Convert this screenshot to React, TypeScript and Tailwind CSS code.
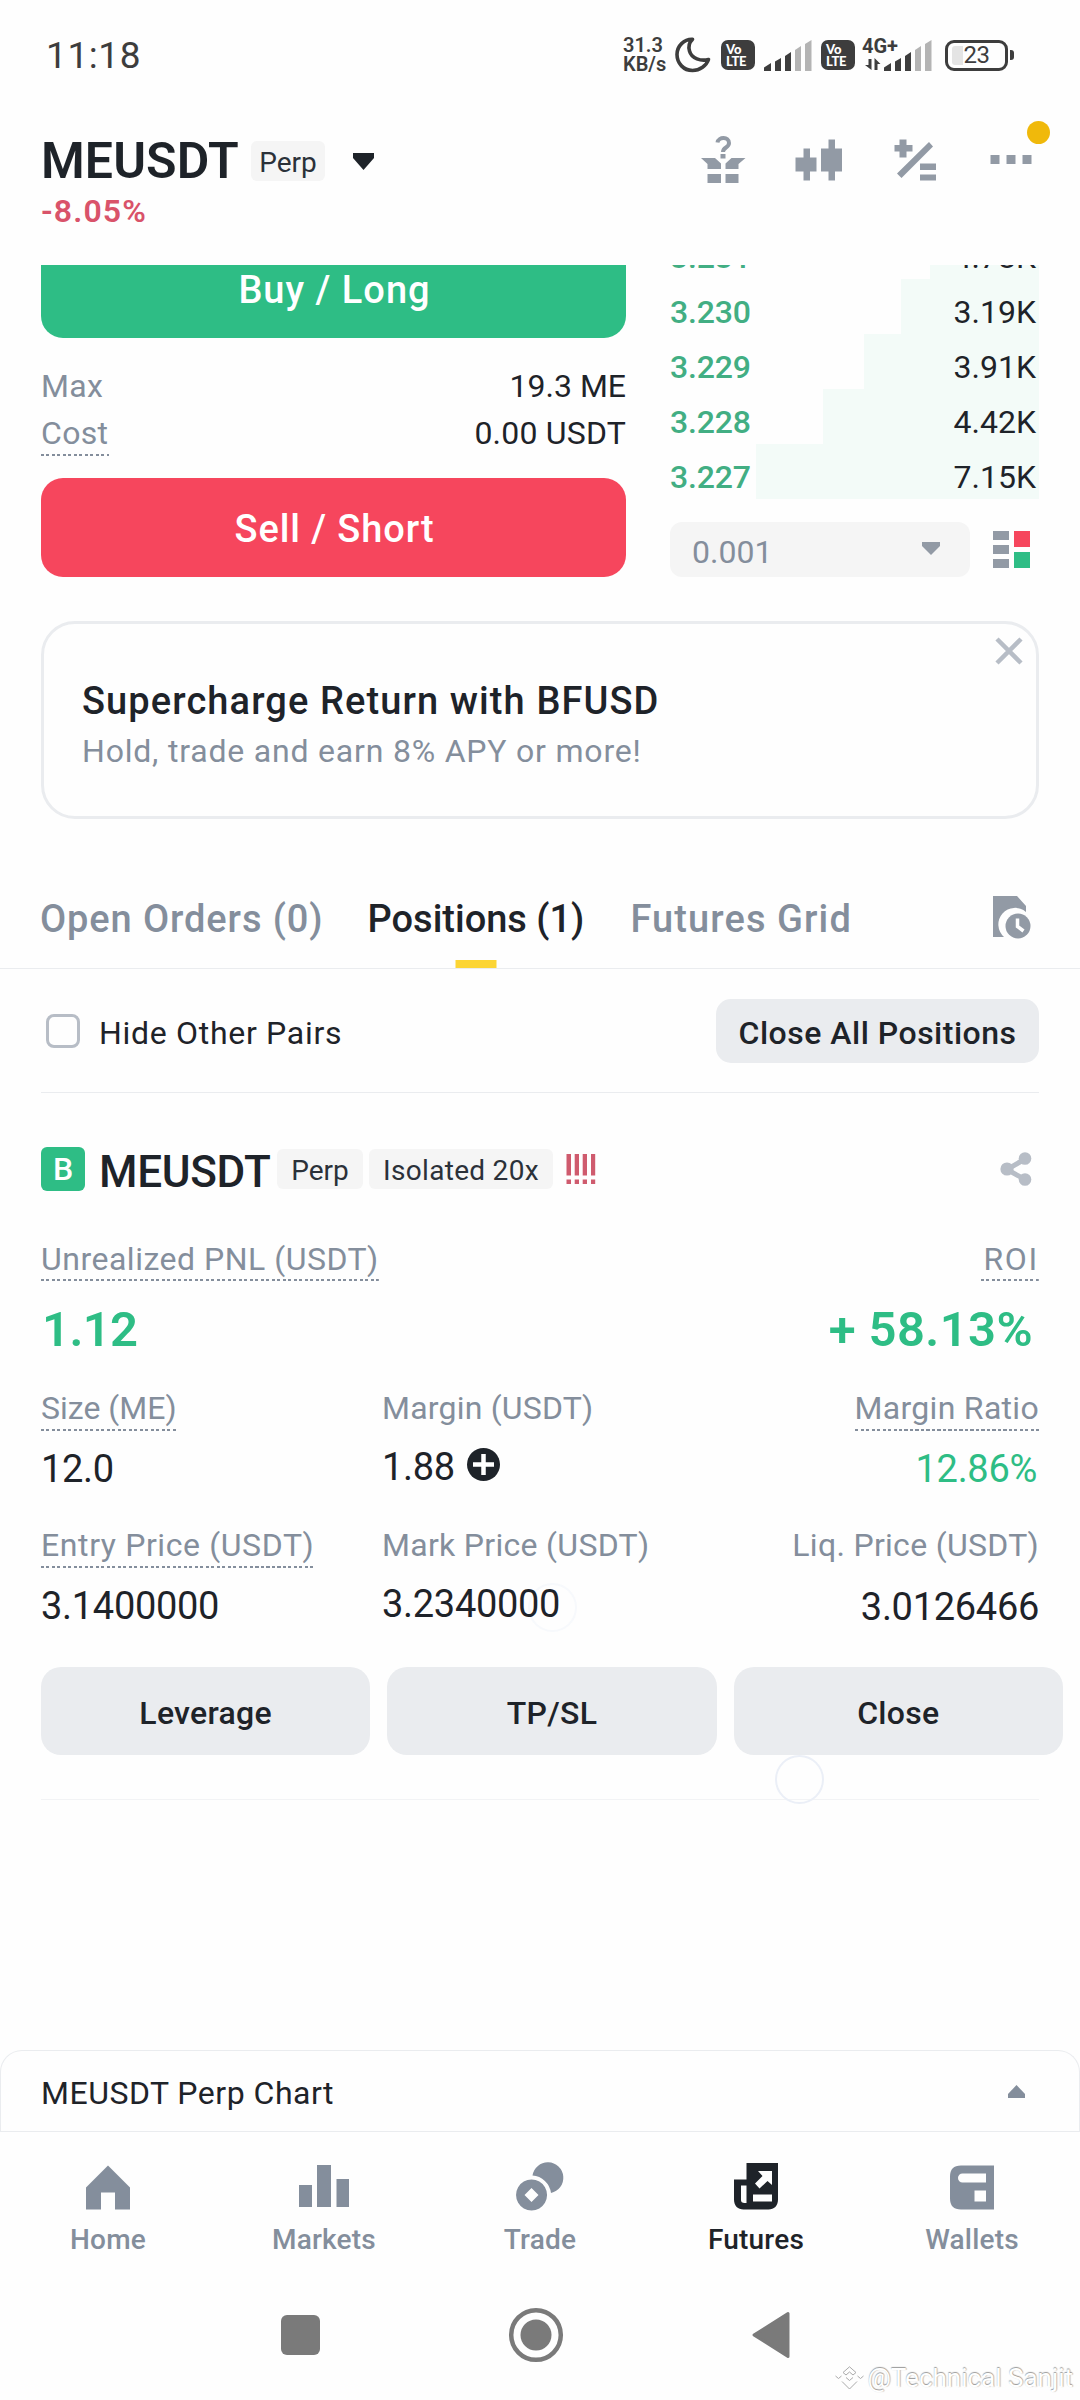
import clsx from "clsx";

const dashed =
  "bg-[repeating-linear-gradient(to_right,#848e9c_0_3px,transparent_3px_5.5px)] bg-[length:100%_2px] bg-bottom bg-no-repeat";

function Signal() {
  return (
    <svg className="h-[31px] w-[48px]" viewBox="0 0 48 31">
      <path d="M0 31V27.5L7 23V31ZM11 31V21.5L17 18V31ZM21 31V16L27 12V31Z" fill="#3d3d3d" />
      <path d="M31 31V10L37 6V31ZM41 31V4L47.500 0V31Z" fill="#b4b4b4" />
    </svg>
  );
}

function VoLte() {
  return (
    <div className="flex h-[30px] w-[34px] flex-col items-start justify-center rounded-[7px] bg-[#3d3d3d] pl-[5px] font-[Lato] text-[13px] leading-[12px] font-black text-white">
      <span>Vo</span>
      <span className="tracking-[-0.2px]">LTE</span>
    </div>
  );
}

function StatusBar() {
  return (
    <div className="flex h-[110px] shrink-0 items-center pr-[72px] pl-[46px] text-[#3d3d3d]">
      <span className="text-[37px] tracking-[0.6px]">11:18</span>
      <div className="ml-auto flex items-center">
        <div className="w-[52px] text-[20px] leading-[19px] font-semibold">
          <p>31.3</p>
          <p>KB/s</p>
        </div>
        <svg className="h-[36px] w-[36px]" viewBox="0 0 36 36" fill="none">
          <path
            d="M17.500 2.300C9 2 2 9 2 17.500C2 26.500 8.800 33.500 17.500 33.500C25 33.500 31.500 28.500 33.500 22.500C26 24.500 16.500 21.500 14.500 14C13.300 9.500 14.500 5 17.500 2.300Z"
            stroke="#3d3d3d"
            strokeWidth="3.600"
            strokeLinejoin="round"
          />
        </svg>
        <div className="ml-[10px]">
          <VoLte />
        </div>
        <div className="ml-[9px]">
          <Signal />
        </div>
        <div className="ml-[9px]">
          <VoLte />
        </div>
        <div className="relative ml-[29px]">
          <Signal />
          <span className="absolute -top-[4px] -left-[22px] text-[20px] leading-[20px] font-bold">
            4G+
          </span>
          <svg className="absolute top-[18px] -left-[19px] h-[13px] w-[16px]" viewBox="0 0 16 13">
            <path d="M3.500 1H6.500V12L0 7H3.500ZM9.500 12V0L15.500 6H12.500V12Z" fill="#3d3d3d" />
          </svg>
        </div>
        <div className="relative ml-[13px] flex h-[31px] w-[63px] items-center justify-center rounded-[9px] border-[3px] border-[#3d3d3d]">
          <div className="absolute left-[4px] h-[19px] w-[11px] rounded-l-[3px] bg-[#e4e4e4]" />
          <span className="relative text-[24px] leading-none tracking-[-0.5px]">23</span>
          <div className="absolute -right-[9px] h-[10px] w-[4px] rounded-r-[3px] bg-[#3d3d3d]" />
        </div>
      </div>
    </div>
  );
}

function Tag({ children, className }: { children: string; className?: string }) {
  return (
    <span
      className={clsx(
        "flex h-[40px] items-center justify-center rounded-[6px] bg-[#f5f5f5] pt-[3px] text-[28px] text-[#2b3139]",
        className
      )}
    >
      {children}
    </span>
  );
}

function Header() {
  return (
    <header className="flex h-[155px] shrink-0 justify-between pt-[26px] pr-[45px] pl-[41px]">
      <div>
        <div className="flex h-[50px] items-center">
          <h1 className="w-[210px] text-[50px] leading-none font-semibold tracking-[0.1px]">MEUSDT</h1>
          <Tag className="w-[74px]">Perp</Tag>
          <svg className="ml-[28px] h-[17px] w-[21px]" viewBox="0 0 21 17">
            <path d="M0 0H21V5L10.500 17L0 5Z" fill="#1e2329" />
          </svg>
        </div>
        <p className="flex h-[49px] items-center text-[32px] font-semibold tracking-[1.100px] text-[#d9536a]">
          -8.05%
        </p>
      </div>
      <div className="flex gap-12">
        <svg className="h-12 w-12" viewBox="0 0 48 48" fill="#929aa5">
          <path
            d="M18.500 6.500C19.500 .500 30 .500 30 7C30 12 24 11 24 16"
            fill="none"
            stroke="#929aa5"
            strokeWidth="4"
          />
          <path d="M21.500 18H26.500V22.500H21.500ZM2 22H16L22 27.500V33H8.500V28ZM46.500 22H32.500L26.500 27.500V33H39.500V28ZM8.500 38H22V47H8.500ZM26.500 38H39.500V47H26.500Z" />
        </svg>
        <svg className="h-12 w-12" viewBox="0 0 48 48" fill="#929aa5">
          <path d="M0.500 21.500H8.500V12.500H15V21.500H21.500V35.500H15V44.500H8.500V35.500H.500ZM26 12.500H33.500V3.500H40V12.500H47V35.500H40V44.500H33.500V35.500H26Z" />
        </svg>
        <svg className="h-12 w-12" viewBox="0 0 48 48" fill="#929aa5">
          <path d="M8.500 3.500H15.500V9H21.500V15.500H15.500V21.500H8.500V15.500H3.500V9H8.500ZM38 6L42 10.500L10.500 42L6 37.500ZM29 27.500H45V34H29ZM29 38.500H45V44.500H29Z" />
        </svg>
        <div className="relative h-12 w-12">
          <svg className="h-12 w-12" viewBox="0 0 48 48" fill="#929aa5">
            <path d="M3.500 19H12.500V28H3.500ZM19.500 19H28.500V28H19.500ZM35.500 19H44.500V28H35.500Z" />
          </svg>
          <span className="absolute -top-[15px] left-[40px] size-[23px] rounded-full bg-[#f0b90b]" />
        </div>
      </div>
    </header>
  );
}

const bids = [
  { price: "3.231", amount: "4.78K", width: "w-[109px]" },
  { price: "3.230", amount: "3.19K", width: "w-[138px]" },
  { price: "3.229", amount: "3.91K", width: "w-[175px]" },
  { price: "3.228", amount: "4.42K", width: "w-[216px]" },
  { price: "3.227", amount: "7.15K", width: "w-[283px]" },
];

function OrderSection() {
  return (
    <section className="flex h-[312px] shrink-0 justify-between overflow-hidden px-[41px]">
      <div className="w-[585px]">
        <button className="-mt-[25px] flex h-[98px] w-full items-center justify-center rounded-[22px] bg-[#2ebd85] pt-[2px] pl-[2px] text-[38px] font-medium tracking-[1px] text-white">
          Buy / Long
        </button>
        <div className="mt-[24px] flex h-[47px] items-center justify-between">
          <span className="tracking-[0.3px] text-[#848e9c]">Max</span>
          <span>19.3 ME</span>
        </div>
        <div className="flex h-[47px] items-center justify-between">
          <span className={clsx("flex h-full items-center pr-px tracking-[0.3px] text-[#848e9c]", dashed)}>
            Cost
          </span>
          <span className="tracking-[0.2px]">0.00 USDT</span>
        </div>
        <button className="mt-[22px] flex h-[99px] w-full items-center justify-center rounded-[22px] bg-[#f6465d] pt-[2px] pl-[2px] text-[38px] font-medium tracking-[0.9px] text-white">
          Sell / Short
        </button>
      </div>
      <div className="w-[369px]">
        <div className="-mt-[41px]">
          {bids.map((b) => (
            <div key={b.price} className="relative flex h-[55px] items-center justify-between pt-[10px] pr-[3px]">
              <div className={clsx("absolute inset-y-0 right-0 bg-[#f3fbf8]", b.width)} />
              <span className="relative font-medium tracking-[-0.2px] text-[#42ae83]">{b.price}</span>
              <span className="relative">{b.amount}</span>
            </div>
          ))}
        </div>
        <div className="mt-[23px] flex items-center">
          <div className="flex h-[55px] w-[300px] items-center justify-between rounded-[12px] bg-[#f5f5f5] pt-[4px] pr-[30px] pl-[22px] text-[#848e9c]">
            0.001
            <svg className="-mt-[6px] h-[13px] w-[18px]" viewBox="0 0 18 13">
              <path d="M0 0H18V4L9 13L0 4Z" fill="#929aa5" />
            </svg>
          </div>
          <svg className="ml-[23px] h-[37px] w-[37px]" viewBox="0 0 37 37">
            <path d="M0 0H16V9H0ZM0 14H16V23H0ZM0 28H16V37H0Z" fill="#929aa5" />
            <path d="M21 0H37V16H21Z" fill="#f6465d" />
            <path d="M21 21H37V37H21Z" fill="#2ebd85" />
          </svg>
        </div>
      </div>
    </section>
  );
}

function Banner() {
  return (
    <section className="relative mx-[41px] mt-[44px] h-[198px] shrink-0 rounded-[34px] border-[3px] border-[#eaecef] pt-[51px] pl-[38px]">
      <p className="flex h-[52px] items-center text-[38px] font-medium tracking-[1.100px]">
        Supercharge Return with BFUSD
      </p>
      <p className="flex h-[47px] items-center tracking-[0.8px] text-[#848e9c]">
        Hold, trade and earn 8% APY or more!
      </p>
      <svg className="absolute top-[13px] right-[13px] h-[28px] w-[28px]" viewBox="0 0 28 28">
        <path d="M2 2L26 26M26 2L2 26" stroke="#b7bdc6" strokeWidth="4.500" />
      </svg>
    </section>
  );
}

function Tabs() {
  return (
    <nav className="mt-[50px] flex h-[100px] shrink-0 items-center border-b border-[#eaecef] pr-[48px] pl-[40px] text-[38px] font-medium text-[#848e9c]">
      <span className="tracking-[0.9px]">Open Orders (0)</span>
      <span className="relative ml-[44px] flex h-full items-center text-[#1e2329]">
        Positions (1)
        <span className="absolute bottom-0 left-1/2 h-[8px] w-[41px] -translate-x-1/2 bg-[#fcd535]" />
      </span>
      <span className="ml-[46px] tracking-[1.100px]">Futures Grid</span>
      <svg className="mr-px mb-[2px] ml-auto h-[43px] w-[39px]" viewBox="0 0 39 43">
        <path d="M1 0H25L34 10V16A14.500 14.500 0 0 0 12 41H1Z" fill="#929aa5" />
        <circle cx="26" cy="30" r="12.500" fill="#929aa5" />
        <path d="M25.500 22.500V30.500L31.500 35" fill="none" stroke="#fff" strokeWidth="3.500" />
      </svg>
    </nav>
  );
}

function Filters() {
  return (
    <div className="mx-[41px] flex h-[124px] shrink-0 items-center border-b border-[#eaecef]">
      <span className="ml-[5px] size-[34px] rounded-[8px] border-[3px] border-[#b7bdc6]" />
      <span className="ml-[19px] pt-[4px] tracking-[0.7px]">Hide Other Pairs</span>
      <button className="ml-auto flex h-[64px] w-[323px] items-center justify-center rounded-[15px] bg-[#eaecef] pt-[4px] font-medium tracking-[0.5px]">
        Close All Positions
      </button>
    </div>
  );
}

function Stat({
  label,
  children,
  underline,
  right,
  labelClass = "tracking-[0.3px]",
  className,
}: {
  label: string;
  children: React.ReactNode;
  underline?: boolean;
  right?: boolean;
  labelClass?: string;
  className?: string;
}) {
  return (
    <div className={clsx("flex flex-col", right ? "items-end" : "items-start")}>
      <span
        className={clsx("flex h-[45px] items-center pb-px text-[#848e9c]", labelClass, underline && dashed)}
      >
        {label}
      </span>
      <span
        className={clsx("mt-[13px] flex h-[50px] items-center text-[38px] tracking-[-0.3px]", className)}
      >
        {children}
      </span>
    </div>
  );
}

function Position() {
  return (
    <section className="relative isolate mx-[41px] flex h-[707px] shrink-0 flex-col border-b border-[#f2f3f5] pt-[54px]">
      <div className="flex h-[44px] items-center">
        <span className="flex size-[44px] items-center justify-center rounded-[6px] bg-[#2ebd85] text-[32px] font-medium text-white">
          B
        </span>
        <h2 className="ml-[14px] w-[177px] pt-[5px] text-[44px] leading-none font-medium tracking-[-0.3px]">
          MEUSDT
        </h2>
        <Tag className="ml-px w-[86px]">Perp</Tag>
        <Tag className="ml-[6px] w-[184px] tracking-[0.3px]">Isolated 20x</Tag>
        <svg className="ml-[13px] h-[30px] w-[30px]" viewBox="0 0 30 30" fill="#cf5b6e">
          <path d="M.500 0H5V21.500H.500ZM8.700 0H13V21.500H8.700ZM16.700 0H21V21.500H16.700ZM25 0H29.200V21.500H25ZM.500 25.500H5V30H.500ZM8.700 25.500H13V30H8.700ZM16.700 25.500H21V30H16.700ZM25 25.500H29.200V30H25Z" />
        </svg>
        <svg className="mr-[7px] ml-auto h-[34px] w-[32px]" viewBox="0 0 32 34">
          <path d="M25 7L7 17.500L25 27.500" fill="none" stroke="#b7bdc6" strokeWidth="5" />
          <circle cx="25" cy="6.500" r="6.300" fill="#b7bdc6" />
          <circle cx="7" cy="17" r="6.600" fill="#b7bdc6" />
          <circle cx="25" cy="27.500" r="6.300" fill="#b7bdc6" />
        </svg>
      </div>

      <div className="mt-[45px] flex justify-between">
        <span className={clsx("flex h-[45px] items-center tracking-[0.5px] text-[#848e9c]", dashed)}>
          Unrealized PNL (USDT)
        </span>
        <span className={clsx("flex h-[45px] items-center pl-[2px] tracking-[1.700px] text-[#848e9c]", dashed)}>
          ROI
        </span>
      </div>
      <div className="mt-[18px] flex h-[60px] items-center justify-between text-[49px] leading-none font-semibold text-[#2ebd85]">
        <span className="pl-px tracking-[-0.6px]">1.12</span>
        <span className="pr-[6px] tracking-[0.4px]">+ 58.13%</span>
      </div>

      <div className="mt-[27px] grid grid-cols-[341px_1fr_auto]">
        <Stat label="Size (ME)" underline labelClass="tracking-[0]">
          12.0
        </Stat>
        <Stat label="Margin (USDT)" labelClass="tracking-[0.2px]" className="-translate-y-[2px]">
          1.88
          <svg className="mb-[5px] ml-[12px] h-[33px] w-[33px]" viewBox="0 0 33 33">
            <circle cx="16.500" cy="16.500" r="16.500" fill="#1e2329" />
            <path d="M16.500 6V27M6 16.500H27" stroke="#fff" strokeWidth="4.500" />
          </svg>
        </Stat>
        <Stat label="Margin Ratio" underline right className="pr-[2px] text-[#2ebd85]">
          12.86%
        </Stat>
      </div>
      <div className="mt-[29px] grid grid-cols-[341px_1fr_auto]">
        <Stat label="Entry Price (USDT)" underline labelClass="tracking-[0.6px]">
          3.1400000
        </Stat>
        <Stat label="Mark Price (USDT)" className="-translate-y-[2px]">
          3.2340000
        </Stat>
        <Stat label="Liq. Price (USDT)" right className="translate-y-px">
          3.0126466
        </Stat>
      </div>

      <div className="mt-[36px] -mr-[24px] grid grid-cols-3 gap-[17px]">
        {["Leverage", "TP/SL", "Close"].map((label) => (
          <button
            key={label}
            className="flex h-[88px] items-center justify-center rounded-[20px] bg-[#eaecef] pt-[4px] font-medium tracking-[0.3px]"
          >
            {label}
          </button>
        ))}
      </div>

      {/* faint touch ripples */}
      <span className="absolute top-[490px] left-[487px] -z-10 size-[49px] rounded-full border-2 border-[#f7f9fc]" />
      <span className="absolute top-[662px] left-[734px] size-[49px] rounded-full border-2 border-[#ebeff7]" />
    </section>
  );
}

const navItems = [
  {
    label: "Home",
    icon: <path d="M2 24.500L24 2.500L46 24.500V46.500H31V29.500H17V46.500H2Z" />,
  },
  {
    label: "Markets",
    icon: <path d="M-1 22H12V44H-1ZM17 2H31V44H17ZM36.500 16H49V44H36.500Z" />,
  },
  {
    label: "Trade",
    icon: (
      <>
        <path d="M16.500 12.500A15.500 15.500 0 1 1 35 30A20 20 0 0 0 16.500 12.500Z" />
        <path
          fillRule="evenodd"
          d="M15.500 16.500A15.500 15.500 0 1 0 15.600 16.500ZM15.500 25L22.500 32L15.500 39L8.500 32Z"
        />
      </>
    ),
  },
  {
    label: "Futures",
    active: true,
    icon: (
      <path
        fillRule="evenodd"
        d="M14.500 0H46V36.500C46 43 42 46.500 36.500 46.500H11.500C6 46.500 2 43 2 36.500V16.500H14.500ZM9 22.500V36.500C9 40 11 40 14.500 40V22.500ZM26 8H40V22L35.500 18L27.500 25.500L23 20.500L30.500 13ZM21 31.500H40V38.500H21Z"
      />
    ),
  },
  {
    label: "Wallets",
    icon: (
      <path
        fillRule="evenodd"
        d="M13 2.500H46V46.500H13Q2 46.500 2 35.500V13.500Q2 2.500 13 2.500ZM14.500 10.500A4.500 4.500 0 0 0 14.500 19.500H38V10.500ZM26.500 27.500V38.500H38V27.500Z"
      />
    ),
  },
];

function BottomNav() {
  return (
    <nav className="grid h-[139px] grid-cols-5 border-t border-[#eaecef] pt-[31px]">
      {navItems.map((item) => (
        <div
          key={item.label}
          className={clsx(
            "flex flex-col items-center text-[28px] font-medium",
            item.active ? "text-[#1e2329]" : "text-[#848e9c]"
          )}
        >
          <svg className="size-12 overflow-visible" viewBox="0 0 48 48" fill="currentColor">
            {item.icon}
          </svg>
          <span className="flex h-[57px] items-center tracking-[0.2px]">{item.label}</span>
        </div>
      ))}
    </nav>
  );
}

function SystemBar() {
  return (
    <div className="relative flex h-[130px] items-center gap-[179px] pl-[273px]">
      <svg className="size-14" viewBox="0 0 56 56" fill="#7a7a7a">
        <rect x="8" y="8" width="39" height="40" rx="6" />
      </svg>
      <svg className="size-14" viewBox="0 0 56 56" fill="#7a7a7a">
        <circle cx="28" cy="28" r="24.800" fill="none" stroke="#7a7a7a" strokeWidth="4.500" />
        <circle cx="28" cy="28" r="15.500" />
      </svg>
      <svg className="size-14" viewBox="0 0 56 56" fill="#7a7a7a">
        <path d="M11 28L45 6.500V49.500Z" stroke="#7a7a7a" strokeWidth="3" strokeLinejoin="round" />
      </svg>
      <div className="absolute right-[7px] bottom-[5px] flex items-center text-[26px] leading-[34px] text-white [text-shadow:0_-1px_1px_#9a9a9a,1px_0_1px_#c4c4c4]">
        <svg className="mr-[3px] h-[24px] w-[29px]" viewBox="0 0 29 24" fill="none" stroke="#aaa">
          <path d="M8 6.500L14.500 .800L21 6.500M8 6.500L11 9L14.500 6L18 9L21 6.500M.500 10L3.500 12.500L6.500 10M22.500 10L25.500 12.500L28.500 10M11 11.500L14.500 14.500L18 11.500M7 15.500L14.500 23L22 15.500" />
        </svg>
        @Technical Sanjit
      </div>
    </div>
  );
}

export default function App() {
  return (
    <div className="flex h-[2400px] w-[1080px] flex-col overflow-hidden bg-[#fefefe] font-[Roboto,sans-serif] text-[32px] leading-none text-[#1e2329]">
      <StatusBar />
      <Header />
      <OrderSection />
      <Banner />
      <Tabs />
      <Filters />
      <Position />
      <footer className="mt-auto shrink-0">
        <div className="flex h-[81px] items-center justify-between rounded-t-[22px] border border-b-0 border-[#eaecef] pr-[54px] pl-[40px] tracking-[0.5px]">
          <span className="pt-[3px]">MEUSDT Perp Chart</span>
          <svg className="h-[13px] w-[17px]" viewBox="0 0 17 13">
            <path d="M8.500 0L17 9V13H0V9Z" fill="#848e9c" />
          </svg>
        </div>
        <BottomNav />
        <SystemBar />
      </footer>
    </div>
  );
}
